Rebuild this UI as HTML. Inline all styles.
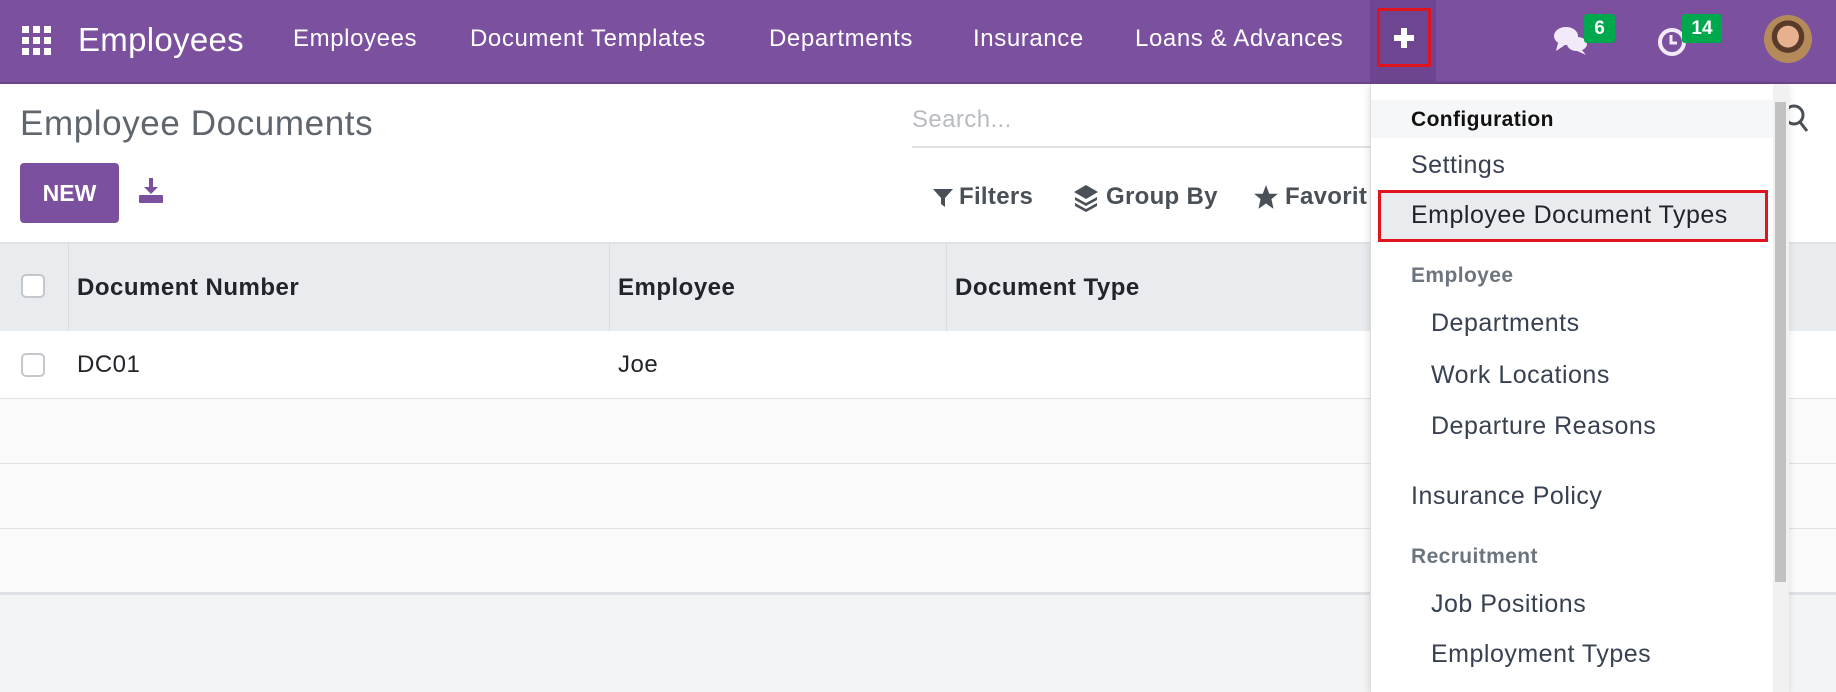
<!DOCTYPE html>
<html><head><meta charset="utf-8"><style>
*{box-sizing:border-box;margin:0;padding:0}
body{width:1836px;height:692px;overflow:hidden;background:#f3f4f6;font-family:"Liberation Sans",sans-serif;position:relative;color:#212529}
.abs{position:absolute;white-space:nowrap}
.nav{position:absolute;left:0;top:0;width:1836px;height:84px;background:#7b509f;border-bottom:2px solid #6a4489}
.nav .t{color:#fff;font-size:24px;letter-spacing:0.6px;top:25px}
.top{position:absolute;left:0;top:84px;width:1836px;height:158px;background:#fff}
.hdr{position:absolute;left:0;top:242px;width:1836px;height:89px;background:#e9ecef;border-top:2px solid #dee2e6}
.row{position:absolute;left:0;width:1836px;background:#fff;border-bottom:1px solid #dee2e6}
.cb{position:absolute;left:21px;width:24px;height:24px;border:2px solid #c4c8cc;border-radius:5px;background:#fff}
.th{font-weight:bold;font-size:24px;letter-spacing:0.5px;top:274px;color:#212529}
.dd{position:absolute;left:1370px;top:84px;width:418px;height:608px;background:#fff;border-left:1px solid #ddd;box-shadow:0 2px 8px rgba(0,0,0,.15)}
.mi{font-size:25px;letter-spacing:0.5px;color:#374151}
.mh{font-size:21px;letter-spacing:0.4px;color:#6c757d;font-weight:bold}
.badge{position:absolute;background:#00a84d;color:#fff;font-size:19px;font-weight:bold;text-align:center;border-radius:3px;height:29px;line-height:29px}
</style></head><body>
<div class="nav">
  <svg class="abs" style="left:21px;top:25px" width="32" height="32" viewBox="0 0 32 32" fill="#fff">
    <rect x="1" y="1" width="7" height="7"/><rect x="12" y="1" width="7" height="7"/><rect x="23" y="1" width="7" height="7"/>
    <rect x="1" y="12" width="7" height="7"/><rect x="12" y="12" width="7" height="7"/><rect x="23" y="12" width="7" height="7"/>
    <rect x="1" y="23" width="7" height="7"/><rect x="12" y="23" width="7" height="7"/><rect x="23" y="23" width="7" height="7"/>
  </svg>
  <div class="abs t" style="left:78px;top:21px;font-size:33px;letter-spacing:0.3px">Employees</div>
  <div class="abs t" style="left:293px">Employees</div>
  <div class="abs t" style="left:470px">Document Templates</div>
  <div class="abs t" style="left:769px">Departments</div>
  <div class="abs t" style="left:973px">Insurance</div>
  <div class="abs t" style="left:1135px">Loans &amp; Advances</div>
  <div class="abs" style="left:1370px;top:0;width:66px;height:84px;background:#6e4590"></div>
  <div class="abs" style="left:1377px;top:8px;width:54px;height:59px;border:3px solid #e0141e"></div>
  <div class="abs" style="left:1394px;top:28px;width:20px;height:20px">
    <div class="abs" style="left:7px;top:0;width:6px;height:20px;background:#fff"></div>
    <div class="abs" style="left:0;top:7px;width:20px;height:6px;background:#fff"></div>
  </div>
  <svg class="abs" style="left:1553px;top:24px" width="36" height="32" viewBox="0 0 36 32" fill="#f2eaf8">
    <ellipse cx="13" cy="12" rx="12" ry="9"/><path d="M5 19 L3 27 L12 21Z"/>
    <ellipse cx="24" cy="20" rx="10" ry="7"/><path d="M28 25 L33 31 L22 26Z"/>
  </svg>
  <div class="badge" style="left:1584px;top:14px;width:31px">6</div>
  <svg class="abs" style="left:1656px;top:26px" width="32" height="32" viewBox="0 0 32 32">
    <circle cx="16" cy="16" r="12" fill="none" stroke="#f2eaf8" stroke-width="4"/>
    <path d="M15 9 V17 H21" fill="none" stroke="#f2eaf8" stroke-width="3"/>
  </svg>
  <div class="badge" style="left:1682px;top:14px;width:40px">14</div>
  <div class="abs" style="left:1764px;top:15px;width:48px;height:48px;border-radius:50%;background:radial-gradient(circle at 50% 45%,#e7b08f 0 30%,#5a3b2a 31% 45%,#b58a5a 46%)"></div>
</div>
<div class="top"></div>
<div class="abs" style="left:20px;top:104px;font-size:35px;letter-spacing:0.6px;color:#5f666d">Employee Documents</div>
<div class="abs" style="left:912px;top:106px;font-size:24px;letter-spacing:0.4px;color:#b8bcc0">Search...</div>
<div class="abs" style="left:912px;top:146px;width:470px;height:2px;background:#dee2e6"></div>
<div class="abs" style="left:20px;top:163px;width:99px;height:60px;background:#7b509f;border-radius:4px;color:#fff;font-weight:bold;font-size:23px;text-align:center;line-height:60px">NEW</div>
<svg class="abs" style="left:138px;top:178px" width="26" height="26" viewBox="0 0 26 26" fill="#7b509f">
  <rect x="11" y="0" width="4" height="11"/><path d="M6 9 H20 L13 16Z"/><rect x="1" y="17" width="24" height="8" rx="1"/>
</svg>
<svg class="abs" style="left:932px;top:187px" width="22" height="22" viewBox="0 0 22 22" fill="#495057"><path d="M1 2 H21 L13 11 V20 L9 17 V11Z"/></svg>
<div class="abs" style="left:959px;top:183px;font-size:24px;letter-spacing:0.3px;font-weight:bold;color:#495057">Filters</div>
<svg class="abs" style="left:1073px;top:184px" width="26" height="28" viewBox="0 0 26 28" fill="#495057"><path d="M13 1 L25 8 L13 15 L1 8Z"/><path d="M2 13 L13 19 L24 13 L24 16 L13 22 L2 16Z"/><path d="M2 19 L13 25 L24 19 L24 22 L13 28 L2 22Z"/></svg>
<div class="abs" style="left:1106px;top:183px;font-size:24px;letter-spacing:0.3px;font-weight:bold;color:#495057">Group By</div>
<svg class="abs" style="left:1253px;top:184px" width="26" height="26" viewBox="0 0 24 24" fill="#495057"><path d="M12 1 L15 9 L23 9 L17 14 L19 23 L12 18 L5 23 L7 14 L1 9 L9 9Z"/></svg>
<div class="abs" style="left:1285px;top:183px;font-size:24px;letter-spacing:0.3px;font-weight:bold;color:#495057">Favorit</div>
<svg class="abs" style="left:1782px;top:103px" width="28" height="30" viewBox="0 0 28 30" fill="none" stroke="#495057" stroke-width="3"><circle cx="12" cy="12" r="9"/><path d="M18 19 L25 28"/></svg>
<div class="hdr"></div>
<div class="abs" style="left:68px;top:244px;width:1px;height:87px;background:#dadde0"></div>
<div class="abs" style="left:609px;top:244px;width:1px;height:87px;background:#dadde0"></div>
<div class="abs" style="left:946px;top:244px;width:1px;height:87px;background:#dadde0"></div>
<div class="cb" style="top:274px"></div>
<div class="abs th" style="left:77px">Document Number</div>
<div class="abs th" style="left:618px">Employee</div>
<div class="abs th" style="left:955px">Document Type</div>
<div class="row" style="top:331px;height:68px"></div>
<div class="cb" style="top:353px"></div>
<div class="abs" style="left:77px;top:351px;font-size:24px;letter-spacing:0.5px">DC01</div>
<div class="abs" style="left:618px;top:351px;font-size:24px;letter-spacing:0.5px">Joe</div>
<div class="row" style="top:399px;height:65px;background:#fafafa"></div>
<div class="row" style="top:464px;height:65px;background:#fafafa"></div>
<div class="row" style="top:529px;height:66px;background:#fafafa;border-bottom:3px solid #dee2e6"></div>
<div class="dd">
  <div class="abs" style="left:0;top:16px;width:402px;height:38px;background:#f6f7f8"></div>
  <div class="abs" style="left:402px;top:0;width:16px;height:608px;background:#f1f1f1"></div>
  <div class="abs" style="left:404px;top:18px;width:11px;height:480px;background:#c1c1c1"></div>
  <div class="abs" style="left:40px;top:24px;font-size:21px;letter-spacing:0.4px;font-weight:bold;color:#111">Configuration</div>
  <div class="abs mi" style="left:40px;top:67px">Settings</div>
  <div class="abs" style="left:7px;top:106px;width:390px;height:52px;background:#e9ecef;border:3px solid #e0141e"></div>
  <div class="abs mi" style="left:40px;top:117px;color:#212529">Employee Document Types</div>
  <div class="abs mh" style="left:40px;top:180px">Employee</div>
  <div class="abs mi" style="left:60px;top:225px">Departments</div>
  <div class="abs mi" style="left:60px;top:277px">Work Locations</div>
  <div class="abs mi" style="left:60px;top:328px">Departure Reasons</div>
  <div class="abs mi" style="left:40px;top:398px">Insurance Policy</div>
  <div class="abs mh" style="left:40px;top:461px">Recruitment</div>
  <div class="abs mi" style="left:60px;top:506px">Job Positions</div>
  <div class="abs mi" style="left:60px;top:556px">Employment Types</div>
</div>
</body></html>
